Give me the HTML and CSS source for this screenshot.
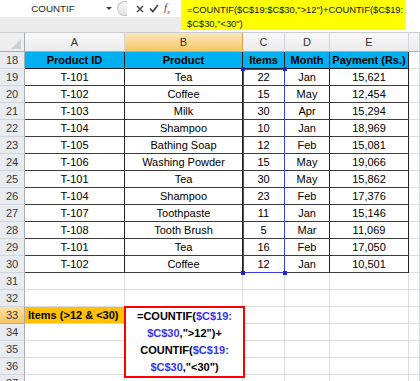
FILE: index.html
```html
<html lang="en">
<head>
    <meta charset="UTF-8">
    <meta name="viewport" content="width=device-width, initial-scale=1.0">
    <link rel="stylesheet" href="styles.css">
</head>
<body>
    <div class="fbar">
        <div class="fbar-left">
            <div class="fbar-top">
                <div class="namebox">
                    <span class="nb-text">COUNTIF</span>
                    <span class="nb-arrow"></span>
                </div>
                <div class="knob"></div>
                <svg class="ico-x" width="8" height="8" viewBox="0 0 8 8"><path d="M1 1 L7 7 M7 1 L1 7" stroke="#4a4a4a" stroke-width="1.5" fill="none"/></svg>
                <svg class="ico-ok" width="10" height="9" viewBox="0 0 10 9"><path d="M1 4.5 L3.8 7.5 L9 1" stroke="#4a4a4a" stroke-width="1.8" fill="none"/></svg>
                <span class="fx">f<sub>x</sub></span>
            </div>
        </div>
        <div class="fbar-input">
            <div class="formula">=COUNTIF($C$19:$C$30,"&gt;12")+COUNTIF($C$19:<br>$C$30,"&lt;30")</div>
        </div>
    </div>

    <div class="sheet">
        <!-- column headers -->
        <div class="ch corner"><svg width="25" height="20" viewBox="0 0 25 20"><polygon points="21,7 21,17 11,17" fill="#cdd0d4"/></svg></div>
        <div class="ch">A</div>
        <div class="ch sel">B</div>
        <div class="ch">C</div>
        <div class="ch">D</div>
        <div class="ch">E</div>
        <div class="ch"></div>

        <div class="rh">18</div><div class="c th">Product ID</div><div class="c th">Product</div><div class="c th">Items</div><div class="c th">Month</div><div class="c th">Payment (Rs.)</div><div class="c"></div>
        <div class="rh">19</div><div class="c td">T-101</div><div class="c td">Tea</div><div class="c td">22</div><div class="c td">Jan</div><div class="c td">15,621</div><div class="c"></div>
        <div class="rh">20</div><div class="c td">T-102</div><div class="c td">Coffee</div><div class="c td">15</div><div class="c td">May</div><div class="c td">12,454</div><div class="c"></div>
        <div class="rh">21</div><div class="c td">T-103</div><div class="c td">Milk</div><div class="c td">30</div><div class="c td">Apr</div><div class="c td">15,294</div><div class="c"></div>
        <div class="rh">22</div><div class="c td">T-104</div><div class="c td">Shampoo</div><div class="c td">10</div><div class="c td">Jan</div><div class="c td">18,969</div><div class="c"></div>
        <div class="rh">23</div><div class="c td">T-105</div><div class="c td">Bathing Soap</div><div class="c td">12</div><div class="c td">Feb</div><div class="c td">15,081</div><div class="c"></div>
        <div class="rh">24</div><div class="c td">T-106</div><div class="c td">Washing Powder</div><div class="c td">15</div><div class="c td">May</div><div class="c td">19,066</div><div class="c"></div>
        <div class="rh">25</div><div class="c td">T-101</div><div class="c td">Tea</div><div class="c td">30</div><div class="c td">May</div><div class="c td">15,862</div><div class="c"></div>
        <div class="rh">26</div><div class="c td">T-104</div><div class="c td">Shampoo</div><div class="c td">23</div><div class="c td">Feb</div><div class="c td">17,376</div><div class="c"></div>
        <div class="rh">27</div><div class="c td">T-107</div><div class="c td">Toothpaste</div><div class="c td">11</div><div class="c td">Jan</div><div class="c td">15,146</div><div class="c"></div>
        <div class="rh">28</div><div class="c td">T-108</div><div class="c td">Tooth Brush</div><div class="c td">5</div><div class="c td">Mar</div><div class="c td">11,069</div><div class="c"></div>
        <div class="rh">29</div><div class="c td">T-101</div><div class="c td">Tea</div><div class="c td">16</div><div class="c td">Feb</div><div class="c td">17,050</div><div class="c"></div>
        <div class="rh">30</div><div class="c td">T-102</div><div class="c td">Coffee</div><div class="c td">12</div><div class="c td">Jan</div><div class="c td">10,501</div><div class="c"></div>

        <div class="rh">31</div><div class="c"></div><div class="c"></div><div class="c"></div><div class="c"></div><div class="c"></div><div class="c"></div>
        <div class="rh">32</div><div class="c"></div><div class="c"></div><div class="c"></div><div class="c"></div><div class="c"></div><div class="c"></div>

        <!-- merged B33:B36 -->
        <div class="merged">=COUNTIF(<span class="ref">$C$19:</span><br><span class="ref">$C$30</span>,"&gt;12")+<br>COUNTIF(<span class="ref">$C$19:</span><br><span class="ref">$C$30</span>,"&lt;30")</div>

        <div class="rh sel">33</div><div class="c lbl">Items (&gt;12 &amp; &lt;30)</div><div class="c"></div><div class="c"></div><div class="c"></div><div class="c"></div>
        <div class="rh">34</div><div class="c"></div><div class="c"></div><div class="c"></div><div class="c"></div><div class="c"></div>
        <div class="rh">35</div><div class="c"></div><div class="c"></div><div class="c"></div><div class="c"></div><div class="c"></div>
        <div class="rh">36</div><div class="c"></div><div class="c"></div><div class="c"></div><div class="c"></div><div class="c"></div>
        <div class="rh">37</div><div class="c"></div><div class="c"></div><div class="c"></div><div class="c"></div><div class="c"></div><div class="c"></div>

        <!-- range highlight for $C$19:$C$30 -->
        <div class="range">
            <span class="h tl"></span><span class="h tr"></span><span class="h bl"></span><span class="h br"></span>
        </div>
    </div>
</body>
</html>
```

FILE: styles.css
```css
body {
    margin: 0;
    width: 420px;
    height: 381px;
    overflow: hidden;
    background: #fff;
    font-family: "Liberation Sans", Arial, sans-serif;
    color: #000;
}

/* formula bar */
.fbar {
    display: flex;
    height: 32px;
}
.fbar-left {
    width: 181px;
    background: #ececec;
}
.fbar-top {
    display: flex;
    align-items: center;
    height: 17px;
    background: #fff;
}
.namebox {
    display: flex;
    align-items: center;
    width: 115px;
    height: 17px;
    font-size: 9.8px;
    color: #1e1e1e;
}
.nb-text {
    flex: 1;
    text-align: center;
}
.nb-arrow {
    width: 0;
    height: 0;
    margin-right: 3px;
    border-left: 3px solid transparent;
    border-right: 3px solid transparent;
    border-top: 3px solid #444;
}
.knob {
    width: 9px;
    height: 13px;
    margin-left: 2px;
    border: 1px solid #c3c6ca;
    border-right: none;
    border-radius: 8px 0 0 8px;
    background: linear-gradient(#f7f7f7, #e2e2e2);
}
.ico-x {
    margin-left: 9px;
}
.ico-ok {
    margin-left: 5px;
}
.fx {
    margin-left: 5px;
    font-family: "Liberation Serif", serif;
    font-style: italic;
    font-size: 11px;
    color: #4a4a4a;
}
.fx sub {
    font-size: 7px;
}
.fbar-input {
    flex: 1;
    height: 32px;
    background: #fff;
}
.formula {
    width: 224px;
    height: 30px;
    box-sizing: border-box;
    padding: 4px 0 0 6px;
    background: #ffff00;
    font-size: 9.35px;
    line-height: 13.5px;
    color: #111;
    white-space: nowrap;
}

/* sheet grid */
.sheet {
    position: relative;
    display: grid;
    grid-template-columns: 25px 100px 118px 42px 45px 79px 11px;
    grid-template-rows: 20px repeat(20, 17px);
}
.ch {
    box-sizing: border-box;
    border-right: 1px solid #d4d6d9;
    border-bottom: 1px solid #a9acb0;
    border-top: 1px solid #c9cbce;
    background: linear-gradient(#f8f8f8, #ebebeb);
    font-size: 11px;
    line-height: 18px;
    text-align: center;
    color: #333;
}
.ch.corner {
    border-right-color: #a9acb0;
    background: #eeeeee;
}
.ch.corner svg {
    display: block;
    margin-top: -1px;
}
.ch.sel {
    background: linear-gradient(#fce6b8, #f5c766);
    border-right-color: #d9a650;
}
.rh {
    box-sizing: border-box;
    border-right: 1px solid #a9acb0;
    border-bottom: 1px solid #d0d4d9;
    background: #e8ebef;
    font-size: 11px;
    line-height: 16px;
    text-align: center;
    color: #3a3a3a;
}
.rh.sel {
    background: linear-gradient(#fbe1a6, #f4c45e);
    border-bottom-color: #d9a650;
}
.c {
    box-sizing: border-box;
    border-right: 1px solid #dadcdd;
    border-bottom: 1px solid #dadcdd;
    font-size: 11px;
    line-height: 16px;
    text-align: center;
    white-space: nowrap;
    overflow: hidden;
}
.th {
    background: #00b0f0;
    font-weight: bold;
    border-right-color: #222;
    border-bottom-color: #222;
}
.td {
    border-right-color: #222;
    border-bottom-color: #3c3c3c;
}
.lbl {
    background: #ffc000;
    font-weight: bold;
    text-align: left;
    padding-left: 3px;
}
.merged {
    grid-column: 3;
    grid-row: 17 / span 4;
    z-index: 1;
    margin: -1px -2px -3px -1px;
    border: 2px solid #ff0000;
    background: #fff;
    font-size: 11px;
    font-weight: bold;
    line-height: 17px;
    text-align: center;
    white-space: nowrap;
}
.ref {
    color: #3535f2;
}

/* blue reference highlight over column C */
.range {
    position: absolute;
    left: 243px;
    top: 37px;
    width: 42px;
    height: 204px;
    box-sizing: border-box;
    border: 1px solid #3b3bf0;
}
.h {
    position: absolute;
    width: 4px;
    height: 4px;
    background: #2020e6;
}
.tl { left: -3px; top: -3px; }
.tr { right: -3px; top: -3px; }
.bl { left: -3px; bottom: -3px; }
.br { right: -3px; bottom: -3px; }
```
